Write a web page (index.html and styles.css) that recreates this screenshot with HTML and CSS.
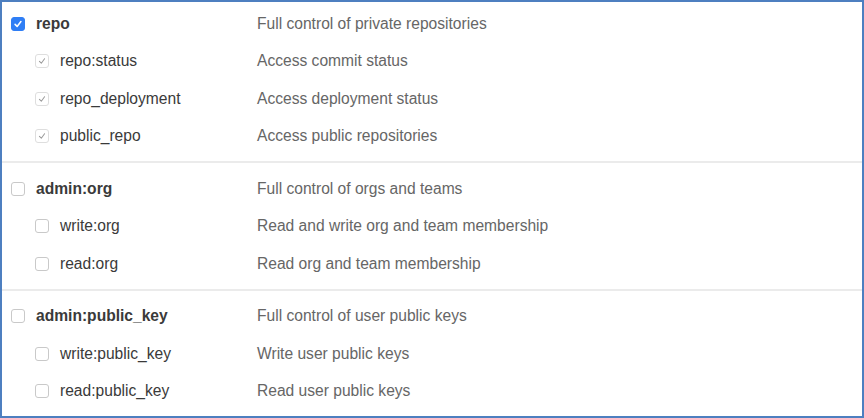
FILE: index.html
```html
<!DOCTYPE html>
<html lang="en">
<head>
  <meta charset="UTF-8">
  <meta name="viewport" content="width=device-width, initial-scale=1.0">
  <title>Scopes</title>
  <link rel="stylesheet" href="styles.css">
</head>
<body>
  <div class="frame">
    <div class="group first">
      <div class="scope parent">
        <span class="box checked"><svg viewBox="0 0 14 14"><path d="M3.6 7.4 L6 9.8 L10.4 4.2" /></svg></span>
        <span class="name">repo</span>
        <span class="desc">Full control of private repositories</span>
      </div>
      <div class="scope child">
        <span class="box ticked"><svg viewBox="0 0 14 14"><path d="M4 7.4 L6.2 9.6 L10 4.4" /></svg></span>
        <span class="name">repo:status</span>
        <span class="desc">Access commit status</span>
      </div>
      <div class="scope child">
        <span class="box ticked"><svg viewBox="0 0 14 14"><path d="M4 7.4 L6.2 9.6 L10 4.4" /></svg></span>
        <span class="name">repo_deployment</span>
        <span class="desc">Access deployment status</span>
      </div>
      <div class="scope child">
        <span class="box ticked"><svg viewBox="0 0 14 14"><path d="M4 7.4 L6.2 9.6 L10 4.4" /></svg></span>
        <span class="name">public_repo</span>
        <span class="desc">Access public repositories</span>
      </div>
    </div>

    <div class="group">
      <div class="scope parent">
        <span class="box"></span>
        <span class="name">admin:org</span>
        <span class="desc">Full control of orgs and teams</span>
      </div>
      <div class="scope child">
        <span class="box"></span>
        <span class="name">write:org</span>
        <span class="desc">Read and write org and team membership</span>
      </div>
      <div class="scope child">
        <span class="box"></span>
        <span class="name">read:org</span>
        <span class="desc">Read org and team membership</span>
      </div>
    </div>

    <div class="group">
      <div class="scope parent">
        <span class="box"></span>
        <span class="name">admin:public_key</span>
        <span class="desc">Full control of user public keys</span>
      </div>
      <div class="scope child">
        <span class="box"></span>
        <span class="name">write:public_key</span>
        <span class="desc">Write user public keys</span>
      </div>
      <div class="scope child">
        <span class="box"></span>
        <span class="name">read:public_key</span>
        <span class="desc">Read user public keys</span>
      </div>
    </div>
  </div>
</body>
</html>
```

FILE: styles.css
```css
body {
  margin: 0;
  font-family: "Liberation Sans", Arial, sans-serif;
  font-size: 15.6px;
  color: #333;
  background: #fff;
}
.frame {
  width: 864px;
  height: 418px;
  box-sizing: border-box;
  border: 2px solid #4d7fc0;
  overflow: hidden;
}
.group {
  padding: 7px 0 6px;
  border-bottom: 2px solid #ebebeb;
}
.group.first {
  padding-top: 3px;
}
.group:last-child {
  border-bottom: none;
}
.scope {
  display: flex;
  align-items: center;
  height: 37.5px;
}
.scope.parent {
  padding-left: 9px;
}
.scope.child {
  padding-left: 33px;
}
.box {
  width: 12px;
  height: 12px;
  border: 1px solid #c9c9c9;
  border-radius: 3px;
  background: #fff;
  display: flex;
  align-items: center;
  justify-content: center;
  flex-shrink: 0;
}
.box svg {
  width: 14px;
  height: 14px;
  fill: none;
  stroke-linecap: round;
  stroke-linejoin: round;
}
.box.checked {
  border-color: #2f7ef5;
  background: #2f7ef5;
}
.box.checked svg {
  stroke: #fff;
  stroke-width: 1.8;
}
.box.ticked {
  border-color: #dedede;
}
.box.ticked svg {
  stroke: #9a9a9a;
  stroke-width: 1.2;
}
.name {
  margin-left: 11px;
  color: #3a3a3a;
}
.parent .name {
  font-weight: bold;
  width: 221px;
}
.child .name {
  width: 197px;
}
.desc {
  color: #666;
}
```
